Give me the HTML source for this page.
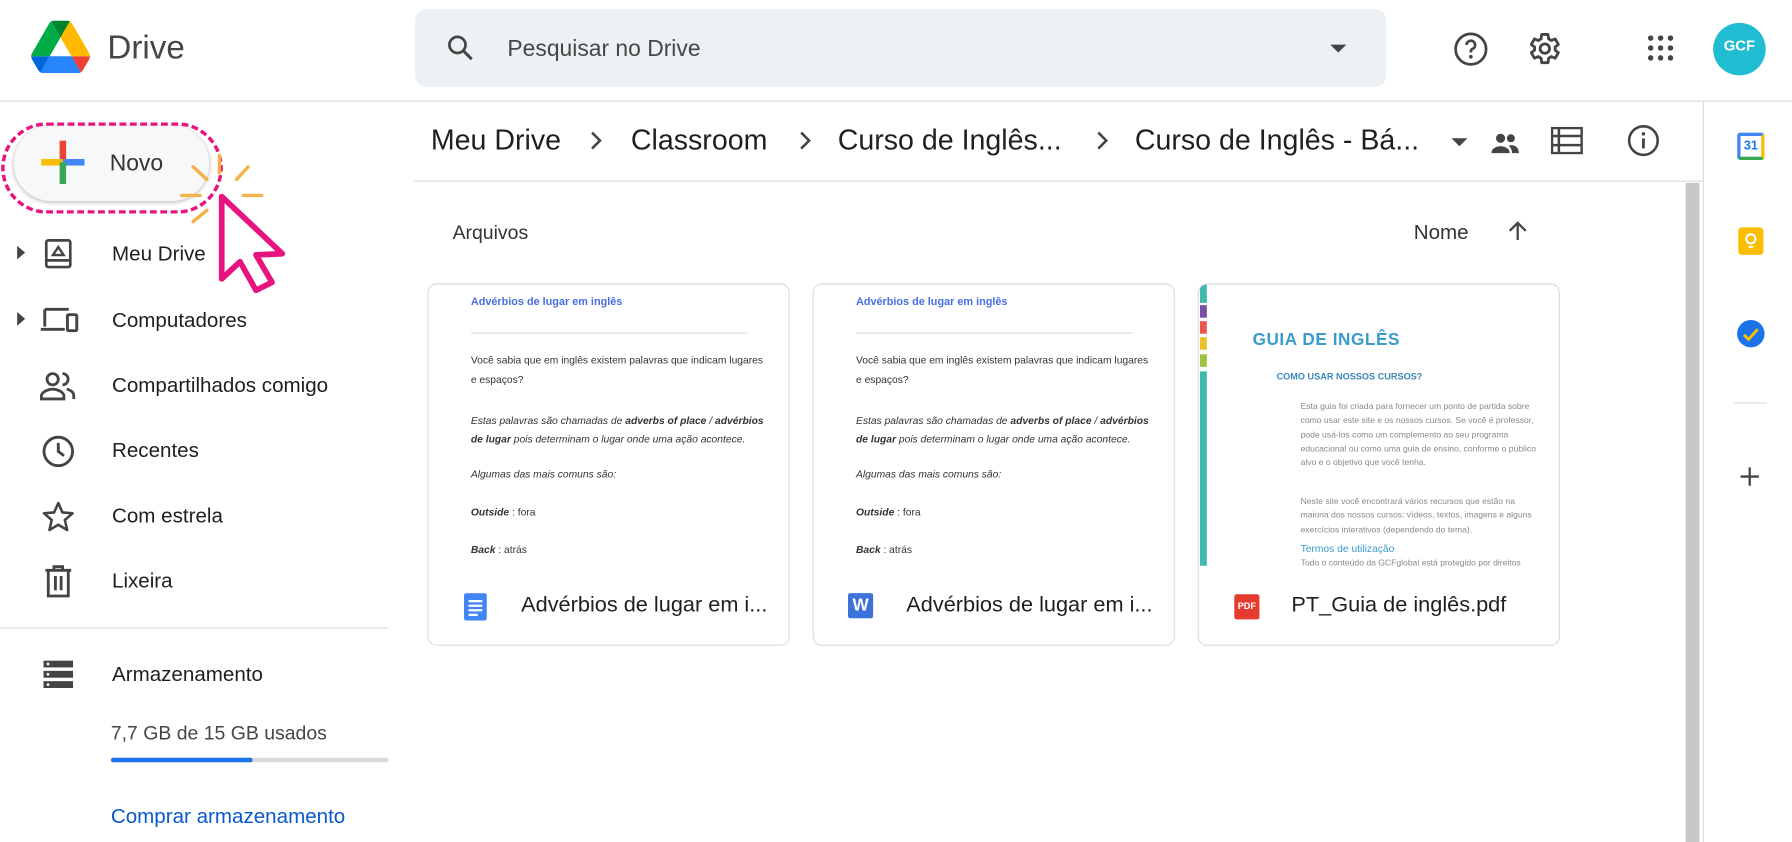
<!DOCTYPE html>
<html><head><meta charset="utf-8"><style>
*{box-sizing:border-box;margin:0;padding:0}
html,body{width:1792px;height:842px;overflow:hidden;background:#fff}
#w{position:absolute;left:0;top:0;width:1568px;height:737px;transform:scale(1.142857);transform-origin:0 0;font-family:"Liberation Sans",Roboto,sans-serif;color:#1f1f1f}
.a{position:absolute}
.nav{position:absolute;left:98px;font-size:18px;color:#1f1f1f}
.card{position:absolute;top:248px;width:317px;height:317px;border:1px solid #dadce0;border-radius:8px;overflow:hidden;background:#fff}
.doc{position:absolute;left:37px;font-size:9px;color:#333;white-space:nowrap}
.ct{position:absolute;left:81px;top:270px;font-size:19px;color:#1f1f1f;white-space:nowrap}
</style></head><body><div id="w">
<!-- header -->
<svg class="a" style="left:27px;top:18px" width="52" height="46" viewBox="0 0 87.3 78"><path d="m6.6 66.85 3.85 6.65c.8 1.4 1.95 2.5 3.3 3.3l13.75-23.8h-27.5c0 1.55.4 3.1 1.2 4.5z" fill="#0066da"/><path d="m43.65 25-13.75-23.8c-1.350.8-2.5 1.9-3.3 3.3l-25.4 44a9.06 9.06 0 0 0-1.2 4.5h27.5z" fill="#00ac47"/><path d="m73.55 76.8c1.35-.8 2.5-1.9 3.3-3.3l1.6-2.75 7.650-13.25c.8-1.4 1.2-2.950 1.2-4.5h-27.502l5.852 11.5z" fill="#ea4335"/><path d="m43.65 25 13.75-23.8c-1.35-.8-2.9-1.2-4.5-1.2h-18.5c-1.6 0-3.15.45-4.5 1.2z" fill="#00832d"/><path d="m59.8 53h-32.3l-13.75 23.8c1.350.8 2.9 1.2 4.5 1.2h50.8c1.6 0 3.150-.45 4.500-1.2z" fill="#2684fc"/><path d="m73.4 26.5-12.7-22c-.8-1.4-1.950-2.5-3.300-3.3l-13.75 23.8 16.150 28h27.450c0-1.550-.4-3.100-1.200-4.500z" fill="#ffba00"/></svg>
<div class="a" style="left:94px;top:26px;font-size:29px;color:#444746">Drive</div>
<div class="a" style="left:363px;top:8px;width:850px;height:68px;background:#eef1f4;border-radius:10px"></div>
<svg class="a" style="left:390px;top:29px" width="26" height="26" viewBox="0 0 24 24"><circle cx="9.5" cy="9.5" r="6.5" fill="none" stroke="#444" stroke-width="2.2"/><path d="M14.5 14.5 21 21" stroke="#444" stroke-width="2.4"/></svg>
<div class="a" style="left:444px;top:32px;font-size:20px;color:#444746">Pesquisar no Drive</div>
<div class="a" style="left:1164px;top:39px;border-left:7px solid transparent;border-right:7px solid transparent;border-top:7px solid #444"></div>
<svg class="a" style="left:1271px;top:27px" width="32" height="32" viewBox="0 0 24 24"><circle cx="12" cy="12" r="10" fill="none" stroke="#444" stroke-width="1.8"/><path d="M9.2 9.3a2.8 2.8 0 1 1 3.8 2.6c-.7.3-1 .9-1 1.6v.6" fill="none" stroke="#444" stroke-width="1.8"/><circle cx="12" cy="17" r="1.2" fill="#444"/></svg>
<svg class="a" style="left:1334px;top:26px" width="33" height="33" viewBox="0 0 24 24"><path d="M19.4 13a7.6 7.6 0 0 0 0-2l2.1-1.6-2-3.5-2.5 1a7 7 0 0 0-1.7-1L14.9 3h-4l-.4 2.9a7 7 0 0 0-1.7 1l-2.5-1-2 3.5L6.4 11a7.6 7.6 0 0 0 0 2l-2.1 1.6 2 3.5 2.5-1a7 7 0 0 0 1.7 1l.4 2.9h4l.4-2.9a7 7 0 0 0 1.7-1l2.5 1 2-3.5z" fill="none" stroke="#444" stroke-width="1.8" stroke-linejoin="round"/><circle cx="12.9" cy="12" r="3" fill="none" stroke="#444" stroke-width="1.8"/></svg>
<svg class="a" style="left:1440px;top:29px" width="26" height="26" viewBox="0 0 24 24" fill="#444"><circle cx="4" cy="4" r="2.2"/><circle cx="12" cy="4" r="2.2"/><circle cx="20" cy="4" r="2.2"/><circle cx="4" cy="12" r="2.2"/><circle cx="12" cy="12" r="2.2"/><circle cx="20" cy="12" r="2.2"/><circle cx="4" cy="20" r="2.2"/><circle cx="12" cy="20" r="2.2"/><circle cx="20" cy="20" r="2.2"/></svg>
<div class="a" style="left:1499px;top:20px;width:46px;height:46px;border-radius:50%;background:#1fbcd2;color:#fff;font-size:13px;font-weight:bold;text-align:center;line-height:40px">GCF</div>
<div class="a" style="left:0;top:88px;width:1568px;height:1px;background:#dadce0"></div>
<!-- Novo -->
<div class="a" style="left:12px;top:110px;width:171px;height:66px;border-radius:33px;background:#f6f8fa;box-shadow:0 1px 4px rgba(0,0,0,.3)"></div>
<div class="a" style="left:1px;top:107px;width:194px;height:80px;border:3px dashed #e8137e;border-radius:40px"></div>
<svg class="a" style="left:36px;top:123px" width="38" height="38" viewBox="0 0 40 40"><rect x="17" y="0" width="6" height="20" fill="#ea4335"/><rect x="0" y="17" width="20" height="6" fill="#fbbc04"/><rect x="20" y="17" width="20" height="6" fill="#4285f4"/><rect x="17" y="20" width="6" height="20" fill="#34a853"/></svg>
<div class="a" style="left:96px;top:132px;font-size:20px;color:#333">Novo</div>
<svg class="a" style="left:150px;top:130px" width="110" height="130" viewBox="150 130 110 130"><g stroke="#f5b14a" stroke-width="3" stroke-linecap="round"><path d="M169 146l12 11"/><path d="M192 136v15"/><path d="M207 157 217 146"/><path d="M213 171h16"/><path d="M159 171h16"/><path d="M169 194l12-10"/></g><path d="M194 172 L194 244 L210 229 L224 254 L238 247 L224 223 L247 222 Z" fill="none" stroke="#e8137e" stroke-width="5" stroke-linejoin="round"/></svg>
<!-- nav -->
<div class="a" style="left:15px;top:215px;border-top:6px solid transparent;border-bottom:6px solid transparent;border-left:7px solid #444"></div>
<svg class="a" style="left:37px;top:208px" width="28" height="28" viewBox="0 0 24 24"><rect x="3" y="2" width="18" height="20" rx="1.5" fill="none" stroke="#444" stroke-width="2"/><path d="M3 17h18" stroke="#444" stroke-width="2"/><path d="M8 13l4-6 4 6z" fill="none" stroke="#444" stroke-width="1.8"/></svg>
<div class="nav" style="top:212px">Meu Drive</div>
<div class="a" style="left:15px;top:273px;border-top:6px solid transparent;border-bottom:6px solid transparent;border-left:7px solid #444"></div>
<svg class="a" style="left:34px;top:266px" width="36" height="28" viewBox="0 0 30 24"><path d="M4 4h18M4 4v13M1 19h18" fill="none" stroke="#444" stroke-width="2.2"/><rect x="21" y="8" width="7" height="12" rx="1" fill="none" stroke="#444" stroke-width="2.2"/></svg>
<div class="nav" style="top:270px">Computadores</div>
<svg class="a" style="left:35px;top:324px" width="32" height="28" viewBox="0 0 26 22"><circle cx="9" cy="6" r="4" fill="none" stroke="#444" stroke-width="2"/><path d="M1 20v-2c0-3 5-5 8-5s8 2 8 5v2z" fill="none" stroke="#444" stroke-width="2"/><path d="M16 2a4 4 0 0 1 0 8M19 13c3 1 5 2 5 5v2" fill="none" stroke="#444" stroke-width="2"/></svg>
<div class="nav" style="top:327px">Compartilhados comigo</div>
<svg class="a" style="left:36px;top:380px" width="30" height="30" viewBox="0 0 24 24"><circle cx="12" cy="12" r="10" fill="none" stroke="#444" stroke-width="2"/><path d="M12 6v6l4 3" fill="none" stroke="#444" stroke-width="2"/></svg>
<div class="nav" style="top:384px">Recentes</div>
<svg class="a" style="left:36px;top:437px" width="30" height="30" viewBox="0 0 24 24"><path d="M12 2.5l2.9 6.6 7.1.6-5.4 4.7 1.6 7L12 17.7l-6.2 3.7 1.6-7L2 9.7l7.1-.6z" fill="none" stroke="#444" stroke-width="1.8" stroke-linejoin="round"/></svg>
<div class="nav" style="top:441px">Com estrela</div>
<svg class="a" style="left:38px;top:494px" width="26" height="30" viewBox="0 0 20 24"><path d="M1 4h18M7 4V1.5h6V4M3 4v18h14V4M8 8v10M12 8v10" fill="none" stroke="#444" stroke-width="2"/></svg>
<div class="nav" style="top:498px">Lixeira</div>
<div class="a" style="left:0;top:549px;width:340px;height:1px;background:#dadce0"></div>
<svg class="a" style="left:38px;top:578px" width="26" height="24" viewBox="0 0 26 24" fill="#444"><rect x="0" y="0" width="26" height="6"/><rect x="0" y="9" width="26" height="6"/><rect x="0" y="18" width="26" height="6"/><g fill="#fff"><circle cx="4" cy="3" r="1.2"/><circle cx="4" cy="12" r="1.2"/><circle cx="4" cy="21" r="1.2"/></g></svg>
<div class="nav" style="top:580px">Armazenamento</div>
<div class="a" style="left:97px;top:632px;font-size:17px;color:#444746">7,7 GB de 15 GB usados</div>
<div class="a" style="left:97px;top:663px;width:243px;height:4px;background:#dadce0;border-radius:2px"><div style="width:124px;height:4px;background:#1a73e8;border-radius:2px"></div></div>
<div class="a" style="left:97px;top:704px;font-size:18px;color:#0b57d0">Comprar armazenamento</div>
<!-- breadcrumb -->
<div class="a" style="left:377px;top:109px;font-size:25px;color:#1f1f1f;white-space:nowrap">Meu Drive</div>
<div class="a" style="left:552px;top:109px;font-size:25px;white-space:nowrap">Classroom</div>
<div class="a" style="left:733px;top:109px;font-size:25px;white-space:nowrap">Curso de Inglês...</div>
<div class="a" style="left:993px;top:109px;font-size:25px;white-space:nowrap">Curso de Inglês - Bá...</div>
<svg class="a" style="left:514px;top:113px" width="16" height="20" viewBox="0 0 16 20"><path d="M4 3l7 7-7 7" fill="none" stroke="#444" stroke-width="2.2"/></svg>
<svg class="a" style="left:697px;top:113px" width="16" height="20" viewBox="0 0 16 20"><path d="M4 3l7 7-7 7" fill="none" stroke="#444" stroke-width="2.2"/></svg>
<svg class="a" style="left:957px;top:113px" width="16" height="20" viewBox="0 0 16 20"><path d="M4 3l7 7-7 7" fill="none" stroke="#444" stroke-width="2.2"/></svg>
<div class="a" style="left:1270px;top:121px;border-left:7px solid transparent;border-right:7px solid transparent;border-top:7px solid #444"></div>
<svg class="a" style="left:1304px;top:115px" width="26" height="20" viewBox="0 0 26 20" fill="#444"><circle cx="9" cy="6" r="4"/><path d="M1 19c0-4 4-6 8-6s8 2 8 6z"/><circle cx="18" cy="6" r="3.5"/><path d="M18 12c4 0 7 2 7 7h-6c0-3-1-5-3-6.5z"/></svg>
<svg class="a" style="left:1357px;top:111px" width="28" height="24" viewBox="0 0 28 24" fill="none" stroke="#444" stroke-width="2.2"><rect x="1" y="1" width="26" height="22"/><path d="M1 8h26M1 16h26M7 1v22"/></svg>
<svg class="a" style="left:1423px;top:108px" width="30" height="30" viewBox="0 0 24 24"><circle cx="12" cy="12" r="10" fill="none" stroke="#444" stroke-width="1.8"/><path d="M12 10.5v7" stroke="#444" stroke-width="2"/><circle cx="12" cy="7.3" r="1.2" fill="#444"/></svg>
<div class="a" style="left:362px;top:158px;width:1128px;height:1px;background:#dadce0"></div>
<div class="a" style="left:1490px;top:89px;width:1px;height:648px;background:#dadce0"></div>
<div class="a" style="left:1475px;top:160px;width:12px;height:577px;background:#c8c8c8"></div>
<div class="a" style="left:396px;top:194px;font-size:17px;color:#333">Arquivos</div>
<div class="a" style="left:1237px;top:193px;font-size:18px;color:#333">Nome</div>
<svg class="a" style="left:1318px;top:192px" width="20" height="20" viewBox="0 0 20 20"><path d="M10 18V3M3 10l7-7 7 7" fill="none" stroke="#444" stroke-width="2"/></svg>
<!-- cards -->
<div class="card" style="left:374px">
<div class="doc" style="top:10px;color:#4a6ee0;font-weight:bold;font-size:9.5px">Advérbios de lugar em inglês</div>
<div class="a" style="left:37px;top:42px;width:242px;height:1px;background:#ddd"></div>
<div class="doc" style="top:61px">Você sabia que em inglês existem palavras que indicam lugares</div>
<div class="doc" style="top:78px">e espaços?</div>
<div class="doc" style="top:114px;font-style:italic">Estas palavras são chamadas de <b>adverbs of place</b> / <b>advérbios</b></div>
<div class="doc" style="top:130px;font-style:italic"><b>de lugar</b> pois determinam o lugar onde uma ação acontece.</div>
<div class="doc" style="top:161px;font-style:italic">Algumas das mais comuns são:</div>
<div class="doc" style="top:194px"><b><i>Outside</i></b> : fora</div>
<div class="doc" style="top:227px"><b><i>Back</i></b> : atrás</div>
<svg class="a" style="left:31px;top:270px" width="20" height="24" viewBox="0 0 20 24"><rect width="20" height="24" rx="2" fill="#4285f4"/><path d="M4 7h12M4 11h12M4 15h12M4 19h8" stroke="#fff" stroke-width="2"/></svg>
<div class="ct">Advérbios de lugar em i...</div></div>
<div class="card" style="left:711px">
<div class="doc" style="top:10px;color:#4a6ee0;font-weight:bold;font-size:9.5px">Advérbios de lugar em inglês</div>
<div class="a" style="left:37px;top:42px;width:242px;height:1px;background:#ddd"></div>
<div class="doc" style="top:61px">Você sabia que em inglês existem palavras que indicam lugares</div>
<div class="doc" style="top:78px">e espaços?</div>
<div class="doc" style="top:114px;font-style:italic">Estas palavras são chamadas de <b>adverbs of place</b> / <b>advérbios</b></div>
<div class="doc" style="top:130px;font-style:italic"><b>de lugar</b> pois determinam o lugar onde uma ação acontece.</div>
<div class="doc" style="top:161px;font-style:italic">Algumas das mais comuns são:</div>
<div class="doc" style="top:194px"><b><i>Outside</i></b> : fora</div>
<div class="doc" style="top:227px"><b><i>Back</i></b> : atrás</div>
<div class="a" style="left:30px;top:270px;width:22px;height:22px;background:#3d73d8;border-radius:2px;color:#fff;font-weight:bold;font-size:15px;text-align:center;line-height:22px">W</div>
<div class="ct">Advérbios de lugar em i...</div></div>
<div class="card" style="left:1048px">
<div class="a" style="left:1px;top:0;width:6px;height:16px;background:#3fb8ae"></div>
<div class="a" style="left:1px;top:18px;width:6px;height:11px;background:#7b4ea8"></div>
<div class="a" style="left:1px;top:32px;width:6px;height:11px;background:#e9584f"></div>
<div class="a" style="left:1px;top:46px;width:6px;height:11px;background:#e8c22d"></div>
<div class="a" style="left:1px;top:61px;width:6px;height:11px;background:#9bc33f"></div>
<div class="a" style="left:1px;top:76px;width:6px;height:170px;background:#3fb8ae"></div>
<div class="a" style="left:47px;top:40px;font-size:15px;font-weight:bold;color:#3a9ccc;letter-spacing:.5px">GUIA DE INGLÊS</div>
<div class="a" style="left:68px;top:76px;font-size:8px;font-weight:bold;color:#3a86b8">COMO USAR NOSSOS CURSOS?</div>
<div class="a" style="left:89px;top:101px;width:210px;font-size:7.5px;line-height:12.3px;color:#888">Esta guia foi criada para fornecer um ponto de partida sobre como usar este site e os nossos cursos. Se você é professor, pode usá-los como um complemento ao seu programa educacional ou como uma guia de ensino, conforme o público alvo e o objetivo que você tenha.</div>
<div class="a" style="left:89px;top:184px;width:210px;font-size:7.5px;line-height:12.3px;color:#888">Neste site você encontrará vários recursos que estão na maioria dos nossos cursos: vídeos, textos, imagens e alguns exercícios interativos (dependendo do tema).</div>
<div class="a" style="left:89px;top:226px;font-size:9px;color:#3a9ccc">Termos de utilização</div>
<div class="a" style="left:89px;top:239px;font-size:7.5px;color:#888;white-space:nowrap">Todo o conteúdo da GCFglobal está protegido por direitos</div>
<div class="a" style="left:31px;top:271px;width:22px;height:22px;background:#e53c2f;border-radius:2px;color:#fff;font-weight:bold;font-size:8px;text-align:center;line-height:22px">PDF</div>
<div class="ct">PT_Guia de inglês.pdf</div></div>
<!-- right panel -->
<div class="a" style="left:1520px;top:116px;width:24px;height:24px;border-radius:3px;background:#fff;border:3px solid #4285f4;border-right-color:#fbbc04;border-bottom-color:#34a853;font-size:11px;font-weight:bold;color:#1a73e8;text-align:center;line-height:18px">31</div>
<div class="a" style="left:1521px;top:199px;width:22px;height:24px;border-radius:3px;background:#fbbc04"></div>
<svg class="a" style="left:1525px;top:201px" width="14" height="20" viewBox="0 0 14 20"><circle cx="7" cy="8" r="4" fill="none" stroke="#fff" stroke-width="1.8"/><path d="M5 15h4" stroke="#fff" stroke-width="1.8"/></svg>
<svg class="a" style="left:1519px;top:279px" width="26" height="26" viewBox="0 0 26 26"><circle cx="13" cy="13" r="12" fill="#1a73e8"/><path d="M7 14l4 4 8-9" fill="none" stroke="#fbbc04" stroke-width="2.5"/></svg>
<div class="a" style="left:1517px;top:352px;width:29px;height:1px;background:#dadce0"></div>
<svg class="a" style="left:1522px;top:408px" width="18" height="18" viewBox="0 0 18 18"><path d="M9 1v16M1 9h16" stroke="#444" stroke-width="2"/></svg>
</div></body></html>
